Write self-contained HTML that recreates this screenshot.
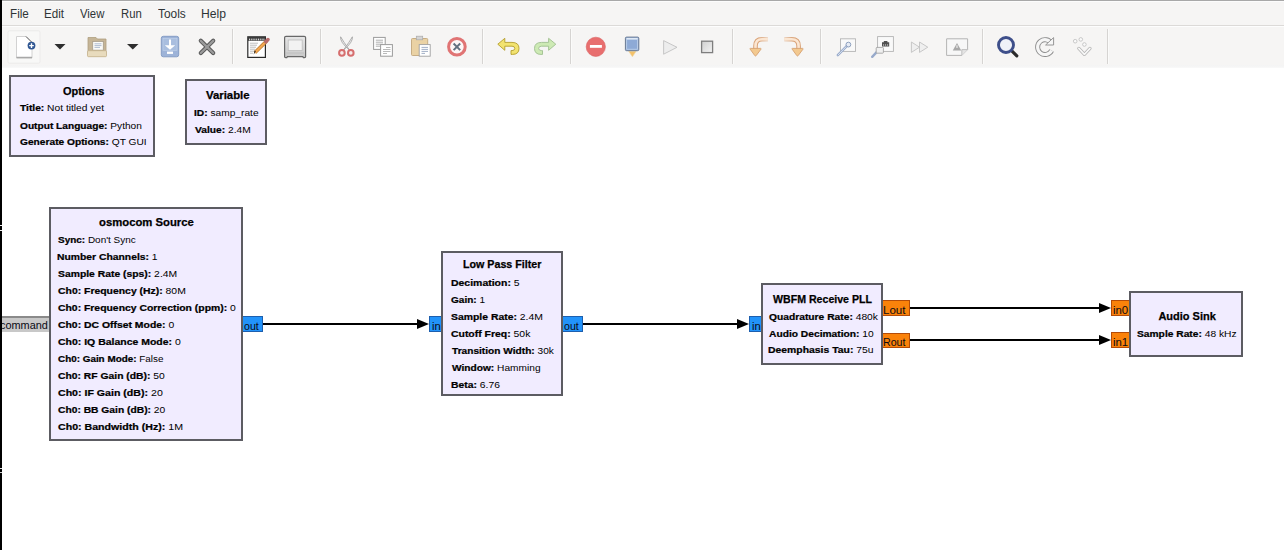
<!DOCTYPE html>
<html><head><meta charset="utf-8">
<style>
*{margin:0;padding:0;box-sizing:border-box}
html,body{width:1284px;height:550px;overflow:hidden;background:#fff;font-family:"Liberation Sans",sans-serif}
#lb{position:absolute;left:0;top:0;width:2px;height:550px;background:#000;z-index:50}
#menubar{position:absolute;left:0;top:0;width:1284px;height:26px;background:#f6f5f4;border-top:1px solid #a8a8a8;box-shadow:inset 0 1px 0 #fcfcfc}
#menubar span{position:absolute;top:5px;font-size:13px;line-height:16px;color:#2e3436}
#msep{position:absolute;left:0;top:25px;width:1284px;height:1px;background:#dcdad8}
#toolbar{position:absolute;left:0;top:26px;width:1284px;height:42px;background:linear-gradient(#f6f5f4 0,#f6f5f4 38px,#f4f4f4 38px,#f6f6f6 40px,#fff 42px);border-top:1px solid #fdfdfd}
.tsep{position:absolute;top:2px;width:2px;height:35px;border-left:1px solid #d6d4d2;border-right:1px solid #fbfbfa}
.blk{position:absolute;background:#f1ecff;border:2px solid #5c5c62;z-index:5}
.t{transform-origin:0 9px;position:absolute;white-space:pre;color:#000;font-size:10px;line-height:12px;z-index:6}
.t b{font-weight:bold;-webkit-text-stroke:0.25px #000}
.ti{transform-origin:0 10px;position:absolute;white-space:pre;color:#000;font-size:11px;font-weight:bold;line-height:12px;z-index:6;-webkit-text-stroke:0.25px #000}
.port{position:absolute;z-index:3}
.pt{transform-origin:0 0;position:absolute;z-index:4;font-size:11px;line-height:14px;white-space:pre;color:#0a0a14}
.pb{background:#2293fa;border:1px solid #1d5fae}
.po{background:#fa820a;border:1px solid #b44c08}
.pg{background:#c8c8c8;border-top:2px solid #8a8a8a}
.line{position:absolute;height:2px;background:#000;z-index:2}
.arr{position:absolute;z-index:2}
.mn{transform-origin:0 0;position:absolute;font-size:12px;line-height:16px;color:#2e3436;white-space:pre;z-index:10}

</style></head><body>
<div id="lb"></div><div style="position:absolute;left:0;width:2px;height:1px;top:225px;background:#f0f0f0;z-index:51"></div><div style="position:absolute;left:0;width:2px;height:1px;top:230px;background:#f0f0f0;z-index:51"></div><div style="position:absolute;left:0;width:2px;height:1px;top:468px;background:#e0e0e0;z-index:51"></div><div style="position:absolute;left:0;width:2px;height:1px;top:472px;background:#d0d0d0;z-index:51"></div>
<div id="menubar"></div>
<div id="msep"></div>
<div id="toolbar">
<div class="tsep" style="left:232px"></div><div class="tsep" style="left:320px"></div><div class="tsep" style="left:482px"></div><div class="tsep" style="left:570px"></div><div class="tsep" style="left:732px"></div><div class="tsep" style="left:820px"></div><div class="tsep" style="left:982px"></div><div class="tsep" style="left:1107px"></div>
</div>
<svg style="position:absolute;left:0;top:0;z-index:10" width="1284" height="68" viewBox="0 0 1284 68">
<defs>
<linearGradient id="gStop" x1="0" y1="0" x2="1" y2="1"><stop offset="0" stop-color="#cfcfcf"/><stop offset="1" stop-color="#f4f4f4"/></linearGradient>
<linearGradient id="gScr" x1="0" y1="0" x2="0" y2="1"><stop offset="0" stop-color="#e6e6e6"/><stop offset="1" stop-color="#c8c8c8"/></linearGradient>
</defs>
<!-- new button frame -->
<rect x="8" y="30.8" width="32" height="32.4" rx="1.5" fill="#f8f8f7" stroke="#ecebea" stroke-width="1"/>
<!-- new doc -->
<path d="M16.5 36.5 H26 L32 42 V58 H16.5 Z" fill="#fff" stroke="#d2d2d2" stroke-width="1"/>
<path d="M16.5 57.5 H32" stroke="#a8a8a8" stroke-width="1.5"/>
<path d="M26 36.5 L32 42.5" stroke="#555" stroke-width="0.9"/>
<circle cx="31.5" cy="45.6" r="3.9" fill="#2f5692"/>
<path d="M29.2 45.6 H33.8 M31.5 43.3 V47.9" stroke="#fff" stroke-width="1.4"/>
<!-- dropdowns -->
<path d="M54.5 44 H65.5 L60 49.5 Z" fill="#2e2e2e"/>
<path d="M127 44 H138.5 L132.8 49.5 Z" fill="#2e2e2e"/>
<!-- folder -->
<path d="M88 56 V37.5 H96 L97.5 39 H106 V56 Z" fill="#c5b597" stroke="#b0a080" stroke-width="0.8"/>
<rect x="92.8" y="41.6" width="10.4" height="8.5" fill="#fbfbf8" stroke="#9a9080" stroke-width="0.6"/>
<path d="M94.5 43.8 H101.5 M94.5 45.6 H101.5 M94.5 47.4 H100" stroke="#8ea0c0" stroke-width="0.7"/>
<rect x="87.5" y="50.7" width="19" height="6" rx="1" fill="#e8dbbd" stroke="#c6b48e" stroke-width="0.8"/>
<!-- save -->
<rect x="161.3" y="36.3" width="17.4" height="20.5" rx="2" fill="#9db3d8" stroke="#7f98c2" stroke-width="0.9"/>
<rect x="163" y="38.3" width="14" height="12" fill="#a9bedf" stroke="#c2d2ea" stroke-width="0.6"/>
<path d="M170 39.5 V47" stroke="#fff" stroke-width="2"/>
<path d="M164.8 45.2 H175.2 L170 49.8 Z" fill="#fff"/>
<rect x="167" y="51.6" width="6" height="2.3" fill="#fff"/>
<!-- close X -->
<path d="M200.8 40.8 L213.2 53 M213.2 40.8 L200.8 53" stroke="#555" stroke-width="4.2" stroke-linecap="round"/>
<path d="M200.8 40.8 L213.2 53 M213.2 40.8 L200.8 53" stroke="#9a9a9a" stroke-width="2.4" stroke-linecap="round"/>
<!-- notepad -->
<rect x="247.8" y="36.8" width="17.6" height="20.6" fill="#fff" stroke="#2a2a2a" stroke-width="1.2"/>
<rect x="248" y="37" width="17.2" height="3.8" fill="#3a3a3a"/>
<path d="M249.5 38.6 V40.3 M251.3 38.6 V40.3 M253.1 38.6 V40.3 M254.9 38.6 V40.3 M256.7 38.6 V40.3 M258.5 38.6 V40.3 M260.3 38.6 V40.3 M262.1 38.6 V40.3 M263.9 38.6 V40.3" stroke="#fff" stroke-width="0.8"/>
<path d="M250 43.2 H258 M250 45.2 H257 M250 47.2 H256 M250 49.2 H255 M250 51.2 H254 M250 53.2 H253" stroke="#a0a0a0" stroke-width="0.7"/>
<path d="M255 52.6 L266.4 41.2" stroke="#b87830" stroke-width="3.6"/>
<path d="M255 52.6 L266.4 41.2" stroke="#f4a850" stroke-width="2.2"/>
<path d="M265.8 41.8 L268 39.6" stroke="#b86a6a" stroke-width="3.6" stroke-linecap="round"/>
<path d="M253.6 54.4 L255.9 51.4 L254.6 50.6 Z" fill="#222"/>
<!-- screen -->
<path d="M284.6 37.6 Q284.6 36.4 286 36.4 H304.2 Q305.6 36.4 305.6 37.6 V56.8 Q305.6 57.6 304.6 57.6 H303.4 L302.8 56.6 H287.4 L286.8 57.6 H285.6 Q284.6 57.6 284.6 56.8 Z" fill="url(#gScr)" stroke="#686868" stroke-width="1.2"/>
<rect x="288.2" y="40" width="14" height="10.6" fill="#f2f2f2" stroke="#bdbdbd" stroke-width="0.8"/>
<path d="M286.2 53 H304" stroke="#bbb" stroke-width="0.8"/>
<!-- scissors -->
<path d="M340.6 36.8 Q339.8 42 349.6 50.2 Q343.6 42 340.6 36.8 Z" fill="#f2f2f2" stroke="#9c9c9c" stroke-width="0.8" stroke-linejoin="round"/>
<path d="M352.4 36.8 Q353.2 42 343.4 50.2 Q349.4 42 352.4 36.8 Z" fill="#f2f2f2" stroke="#9c9c9c" stroke-width="0.8" stroke-linejoin="round"/>
<circle cx="341.9" cy="52.9" r="2.8" fill="#f6eaea" stroke="#d66e6e" stroke-width="2"/>
<circle cx="350.8" cy="52.9" r="2.8" fill="#f6eaea" stroke="#d66e6e" stroke-width="2"/>
<!-- copy -->
<rect x="373.6" y="37.4" width="11.6" height="12" fill="#fff" stroke="#9b9b9b" stroke-width="1"/>
<path d="M375.8 40.2 H383 M375.8 42.2 H383 M375.8 44.2 H383 M375.8 46.2 H380" stroke="#9a9a9a" stroke-width="0.8"/>
<rect x="380.6" y="44.6" width="11.8" height="11.6" fill="#fff" stroke="#9b9b9b" stroke-width="1"/>
<path d="M386 47.5 H390.5 M383 49.5 H390.5 M383 51.5 H390.5 M383 53.5 H387" stroke="#a8a8a8" stroke-width="0.8"/>
<!-- paste -->
<rect x="411.5" y="38.5" width="16.2" height="17" rx="1" fill="#ead2a4" stroke="#c7ad84" stroke-width="1"/>
<rect x="416.3" y="36.2" width="6.4" height="3.6" fill="#d4d4d4" stroke="#aaa" stroke-width="0.7"/>
<rect x="419.2" y="44.6" width="11" height="11.6" fill="#fff" stroke="#a0a0a0" stroke-width="0.9"/>
<path d="M421.5 47.4 H428 M421.5 49.4 H428 M421.5 51.4 H428 M421.5 53.4 H425" stroke="#8a9ab8" stroke-width="0.8"/>
<!-- delete -->
<circle cx="456.9" cy="46.8" r="8.3" fill="#fdf6f6" stroke="#e07474" stroke-width="3"/>
<path d="M453.6 43.5 L460.2 50.1 M460.2 43.5 L453.6 50.1" stroke="#637080" stroke-width="2"/>
<!-- undo -->
<path d="M497.8 44.2 L504.8 38.3 V42.4 H512 Q519 42.4 519 48.4 Q519 54.4 512.5 54.4 H511 V50.6 H512 Q514.8 50.6 514.8 48.4 Q514.8 46.2 512 46.2 H504.8 V50.3 Z" fill="#f2e370" stroke="#b49e2c" stroke-width="0.9" stroke-linejoin="round"/>
<!-- redo -->
<path d="M555.8 44.2 L548.6 38.3 V42.4 H541.5 Q534.5 42.4 534.5 48.4 Q534.5 54.4 541 54.4 H542.5 V50.6 H541.5 Q538.7 50.6 538.7 48.4 Q538.7 46.2 541.5 46.2 H548.6 V50.3 Z" fill="#cdeab4" stroke="#9fbf8e" stroke-width="0.9" stroke-linejoin="round"/>
<!-- red stop -->
<circle cx="595.8" cy="46.8" r="9.6" fill="#e86e6e" stroke="#d86060" stroke-width="0.6"/>
<rect x="589.9" y="45" width="12" height="2.8" fill="#fff"/>
<!-- generate -->
<path d="M628.6 51.2 H636.2 L632.4 56.8 Z" fill="#f4c26a" stroke="#f0d8a8" stroke-width="0.6" stroke-linejoin="round"/>
<rect x="625.4" y="37.1" width="13.4" height="13.6" rx="1.2" fill="#8eaad6" stroke="#6a7a92" stroke-width="1"/>
<path d="M626.4 38.6 H637.8" stroke="#dfe9f6" stroke-width="1.4"/>
<rect x="626.7" y="39.4" width="10.8" height="9.8" fill="none" stroke="#c9d9ef" stroke-width="0.7"/>
<!-- play -->
<path d="M663.6 40.6 V54.2 L677 47.3 Z" fill="#ededed" stroke="#c2c2c2" stroke-width="0.9" stroke-linejoin="round"/>
<!-- stop -->
<rect x="701.6" y="41.2" width="11" height="11.4" fill="url(#gStop)" stroke="#7e7e7e" stroke-width="1.3"/>
<!-- rotate ccw -->
<defs>
<linearGradient id="fadeL" x1="748" y1="0" x2="768" y2="0" gradientUnits="userSpaceOnUse"><stop offset="0.55" stop-color="#d9a277" stop-opacity="1"/><stop offset="1" stop-color="#d9a277" stop-opacity="0.35"/></linearGradient>
<linearGradient id="fadeR" x1="804" y1="0" x2="784" y2="0" gradientUnits="userSpaceOnUse"><stop offset="0.55" stop-color="#d9a277" stop-opacity="1"/><stop offset="1" stop-color="#d9a277" stop-opacity="0.35"/></linearGradient>
</defs>
<path d="M767.9 39.3 H762 Q755.5 39.3 755.5 46 V50" fill="none" stroke="url(#fadeL)" stroke-width="4.6"/>
<path d="M767.9 39.3 H762 Q755.5 39.3 755.5 46 V50" fill="none" stroke="#fbe6d2" stroke-width="2.6"/>
<path d="M750.2 49.2 Q749.4 48.6 750.4 48.4 H760.6 Q761.6 48.6 760.8 49.4 L756.2 55.6 Q755.5 56.4 754.8 55.6 Z" fill="#f3c98f" stroke="#d6a070" stroke-width="0.9" stroke-linejoin="round"/>
<!-- rotate cw -->
<path d="M784.2 39.3 H791.6 Q798.6 39.3 798.6 46 V50" fill="none" stroke="url(#fadeR)" stroke-width="4.6"/>
<path d="M784.2 39.3 H791.6 Q798.6 39.3 798.6 46 V50" fill="none" stroke="#fbe6d2" stroke-width="2.6"/>
<path d="M792.2 49.2 Q791.4 48.6 792.4 48.4 H802.6 Q803.6 48.6 802.8 49.4 L798.2 55.6 Q797.5 56.4 796.8 55.6 Z" fill="#f3c98f" stroke="#d6a070" stroke-width="0.9" stroke-linejoin="round"/>
<!-- port icon 1 -->
<rect x="840.5" y="38.8" width="15" height="12.6" fill="#f9f9f9" stroke="#b4b4b4" stroke-width="0.9"/>
<path d="M837.8 55.2 L847.2 45.6" stroke="#98aacb" stroke-width="2.4" stroke-linecap="round"/>
<path d="M837.8 55.2 L847.2 45.6" stroke="#dfe6f2" stroke-width="0.9"/>
<circle cx="848.4" cy="44.6" r="2.4" fill="#e6ebf4" stroke="#8296b8" stroke-width="0.9"/>
<!-- port icon 2 -->
<rect x="877.6" y="36.6" width="15.8" height="14.8" fill="#f9f9f9" stroke="#b4b4b4" stroke-width="0.9"/>
<path d="M882 46.6 V42.2 H883.8 V41 H887.4 V42.2 H889.2 V46.6 Z" fill="#4f4f4f"/>
<path d="M883.6 44 V46 M885.6 44 V46 M887.6 44 V46" stroke="#ddd" stroke-width="0.6"/>
<path d="M872.2 56.8 L877.6 51.2" stroke="#98aacb" stroke-width="2.4" stroke-linecap="round"/>
<rect x="876.2" y="47.4" width="7.2" height="5.8" rx="0.8" fill="#f0f0f0" stroke="#9a9a9a" stroke-width="0.8"/>
<!-- ffw -->
<path d="M911.4 42 V52.4 L919.5 47.2 Z M919.5 42 V52.4 L927.8 47.2 Z" fill="#efefef" stroke="#c2c2c2" stroke-width="0.9" stroke-linejoin="round"/>
<!-- warning doc -->
<path d="M946.6 38.8 H967.6 V49.6 L961.8 55.4 H946.6 Z" fill="#f7f7f7" stroke="#b4b4b4" stroke-width="1"/>
<path d="M961.8 55.4 V49.6 H967.6" fill="#e4e4e4" stroke="#b4b4b4" stroke-width="0.8"/>
<path d="M952.8 50.4 L957 43 L961.2 50.4 Z" fill="#a8a8a8"/>
<path d="M957 45.2 V48" stroke="#f4f4f4" stroke-width="1.1"/>
<!-- search -->
<path d="M1011.3 50.4 L1016.8 55.8" stroke="#2b2b2b" stroke-width="3.2" stroke-linecap="round"/>
<circle cx="1006" cy="45" r="7.5" fill="#f0f2f8" stroke="#3e4f8a" stroke-width="2.9"/>
<!-- reload -->
<path d="M1051.5 43.5 A7.4 7.4 0 1 0 1051.6 50.5" fill="none" stroke="#8c8c8c" stroke-width="5"/>
<path d="M1051.5 43.5 A7.4 7.4 0 1 0 1051.6 50.5" fill="none" stroke="#f6f6f6" stroke-width="3.2"/>
<path d="M1045.6 45 H1053.6 V37.6 Z" fill="#f6f6f6" stroke="#8c8c8c" stroke-width="0.9" stroke-linejoin="round"/>
<!-- dots chevron -->
<circle cx="1075.2" cy="41.2" r="1.8" fill="#fafafa" stroke="#bdbdbd" stroke-width="0.8"/>
<circle cx="1080.8" cy="39.4" r="1.8" fill="#fafafa" stroke="#bdbdbd" stroke-width="0.8"/>
<circle cx="1084.4" cy="44.5" r="1.8" fill="#fafafa" stroke="#bdbdbd" stroke-width="0.8"/>
<path d="M1078.8 48.4 L1084.4 54.4 L1090 48.4" fill="none" stroke="#b4b4b4" stroke-width="3.2" stroke-linejoin="round" stroke-linecap="round"/>
<path d="M1078.8 48.4 L1084.4 54.4 L1090 48.4" fill="none" stroke="#f8f8f8" stroke-width="1.6" stroke-linejoin="round" stroke-linecap="round"/>
</svg>

<div class="port pg" style="left:0px;top:316px;width:49px;height:16px"></div>
<div class="port pb" style="left:241px;top:316px;width:22px;height:16px"></div>
<div class="port pb" style="left:429px;top:316px;width:14px;height:16px"></div>
<div class="port pb" style="left:561px;top:316px;width:22px;height:16px"></div>
<div class="port pb" style="left:749px;top:316px;width:14px;height:16px"></div>
<div class="port po" style="left:881px;top:300px;width:29px;height:16px"></div>
<div class="port po" style="left:881px;top:333px;width:29px;height:15px"></div>
<div class="port po" style="left:1111px;top:300px;width:20px;height:16px"></div>
<div class="port po" style="left:1111px;top:332px;width:20px;height:16px"></div>
<div class="line" style="left:263px;top:323px;width:155px"></div>
<svg class="arr" style="left:417px;top:319px" width="12" height="10"><polygon points="0,0 12,5 0,10" fill="#000"/></svg>
<div class="line" style="left:583px;top:323px;width:155px"></div>
<svg class="arr" style="left:737px;top:319px" width="12" height="10"><polygon points="0,0 12,5 0,10" fill="#000"/></svg>
<div class="line" style="left:910px;top:307px;width:190px"></div>
<svg class="arr" style="left:1099px;top:303px" width="12" height="10"><polygon points="0,0 12,5 0,10" fill="#000"/></svg>
<div class="line" style="left:910px;top:339px;width:190px"></div>
<svg class="arr" style="left:1099px;top:335px" width="12" height="10"><polygon points="0,0 12,5 0,10" fill="#000"/></svg>
<div class="blk" style="left:9px;top:75px;width:146px;height:82px"></div>
<div class="blk" style="left:185px;top:79px;width:82px;height:66px"></div>
<div class="blk" style="left:49px;top:207px;width:194px;height:234px"></div>
<div class="blk" style="left:441px;top:251px;width:122px;height:145px"></div>
<div class="blk" style="left:761px;top:283px;width:122px;height:82px"></div>
<div class="blk" style="left:1129px;top:291px;width:114px;height:66px"></div>
<div id="x0" class="mn" style="left:10.01px;top:6px;transform:scale(0.9722,1.0)">File</div>
<div id="x1" class="mn" style="left:44.21px;top:6px;transform:scale(0.9700,1.0)">Edit</div>
<div id="x2" class="mn" style="left:79.82px;top:6px;transform:scale(0.9440,1.0)">View</div>
<div id="x3" class="mn" style="left:121.22px;top:6px;transform:scale(0.9429,1.0)">Run</div>
<div id="x4" class="mn" style="left:157.80px;top:6px;transform:scale(0.9889,1.0)">Tools</div>
<div id="x5" class="mn" style="left:201.19px;top:6px;transform:scale(1.0125,1.0)">Help</div>
<div id="x6" class="ti" style="left:62.60px;top:85px;transform:scale(0.9952,1.0)">Options</div>
<div id="x7" class="t" style="left:19.60px;top:102px;transform:scale(1.0232,0.92)"><b>Title:</b> Not titled yet</div>
<div id="x8" class="t" style="left:19.60px;top:120px;transform:scale(1.0158,0.92)"><b>Output Language:</b> Python</div>
<div id="x9" class="t" style="left:19.60px;top:136px;transform:scale(1.0194,0.92)"><b>Generate Options:</b> QT GUI</div>
<div id="x10" class="ti" style="left:205.61px;top:89px;transform:scale(1.0333,1.0)">Variable</div>
<div id="x11" class="t" style="left:194.19px;top:107px;transform:scale(1.0190,0.92)"><b>ID:</b> samp_rate</div>
<div id="x12" class="t" style="left:195.21px;top:124px;transform:scale(1.0222,0.92)"><b>Value:</b> 2.4M</div>
<div id="x13" class="ti" style="left:99.37px;top:216px;transform:scale(1.0275,1.0)">osmocom Source</div>
<div id="x14" class="t" style="left:57.60px;top:234px;transform:scale(0.9962,0.92)"><b>Sync:</b> Don&#39;t Sync</div>
<div id="x15" class="t" style="left:56.57px;top:251px;transform:scale(1.0344,0.92)"><b>Number Channels:</b> 1</div>
<div id="x16" class="t" style="left:57.61px;top:268px;transform:scale(1.0357,0.92)"><b>Sample Rate (sps):</b> 2.4M</div>
<div id="x17" class="t" style="left:57.61px;top:285px;transform:scale(1.0410,0.92)"><b>Ch0: Frequency (Hz):</b> 80M</div>
<div id="x18" class="t" style="left:57.61px;top:302px;transform:scale(1.0392,0.92)"><b>Ch0: Frequency Correction (ppm):</b> 0</div>
<div id="x19" class="t" style="left:57.61px;top:319px;transform:scale(1.0402,0.92)"><b>Ch0: DC Offset Mode:</b> 0</div>
<div id="x20" class="t" style="left:57.61px;top:336px;transform:scale(1.0470,0.92)"><b>Ch0: IQ Balance Mode:</b> 0</div>
<div id="x21" class="t" style="left:57.59px;top:353px;transform:scale(0.9879,0.92)"><b>Ch0: Gain Mode:</b> False</div>
<div id="x22" class="t" style="left:57.61px;top:370px;transform:scale(1.0340,0.92)"><b>Ch0: RF Gain (dB):</b> 50</div>
<div id="x23" class="t" style="left:57.61px;top:387px;transform:scale(1.0596,0.92)"><b>Ch0: IF Gain (dB):</b> 20</div>
<div id="x24" class="t" style="left:57.60px;top:404px;transform:scale(1.0267,0.92)"><b>Ch0: BB Gain (dB):</b> 20</div>
<div id="x25" class="t" style="left:57.62px;top:421px;transform:scale(1.0615,0.92)"><b>Ch0: Bandwidth (Hz):</b> 1M</div>
<div id="x26" class="ti" style="left:462.81px;top:258px;transform:scale(0.9713,1.0)">Low Pass Filter</div>
<div id="x27" class="t" style="left:450.76px;top:277px;transform:scale(1.0462,0.92)"><b>Decimation:</b> 5</div>
<div id="x28" class="t" style="left:450.79px;top:294px;transform:scale(1.0030,0.92)"><b>Gain:</b> 1</div>
<div id="x29" class="t" style="left:450.77px;top:311px;transform:scale(1.0402,0.92)"><b>Sample Rate:</b> 2.4M</div>
<div id="x30" class="t" style="left:450.76px;top:328px;transform:scale(1.0427,0.92)"><b>Cutoff Freq:</b> 50k</div>
<div id="x31" class="t" style="left:451.80px;top:345px;transform:scale(1.0139,0.92)"><b>Transition Width:</b> 30k</div>
<div id="x32" class="t" style="left:451.80px;top:362px;transform:scale(1.0161,0.92)"><b>Window:</b> Hamming</div>
<div id="x33" class="t" style="left:450.77px;top:379px;transform:scale(1.0348,0.92)"><b>Beta:</b> 6.76</div>
<div id="x34" class="ti" style="left:773.17px;top:293px;transform:scale(0.9641,1.0)">WBFM Receive PLL</div>
<div id="x35" class="t" style="left:768.60px;top:311px;transform:scale(1.0264,0.92)"><b>Quadrature Rate:</b> 480k</div>
<div id="x36" class="t" style="left:768.60px;top:328px;transform:scale(1.0245,0.92)"><b>Audio Decimation:</b> 10</div>
<div id="x37" class="t" style="left:767.57px;top:344px;transform:scale(1.0400,0.92)"><b>Deemphasis Tau:</b> 75u</div>
<div id="x38" class="ti" style="left:1158.39px;top:310px;transform:scale(1.0000,1.0)">Audio Sink</div>
<div id="x39" class="t" style="left:1137.00px;top:328px;transform:scale(1.0237,0.92)"><b>Sample Rate:</b> 48 kHz</div>
<div id="x40" class="pt" style="left:0.00px;top:318px;transform:scale(0.9896,1.0)">command</div>
<div id="x41" class="pt" style="left:244.00px;top:319px;transform:scale(0.9667,1.0)">out</div>
<div id="x42" class="pt" style="left:431.59px;top:319px;transform:scale(1.0250,1.0)">in</div>
<div id="x43" class="pt" style="left:564.00px;top:319px;transform:scale(0.9667,1.0)">out</div>
<div id="x44" class="pt" style="left:751.59px;top:319px;transform:scale(1.0250,1.0)">in</div>
<div id="x45" class="pt" style="left:883.32px;top:303px;transform:scale(1.0500,1.0)">Lout</div>
<div id="x46" class="pt" style="left:883.43px;top:335px;transform:scale(0.9682,1.0)">Rout</div>
<div id="x47" class="pt" style="left:1112.98px;top:303px;transform:scale(1.0357,1.0)">in0</div>
<div id="x48" class="pt" style="left:1112.98px;top:335px;transform:scale(1.0357,1.0)">in1</div>
</body></html>
